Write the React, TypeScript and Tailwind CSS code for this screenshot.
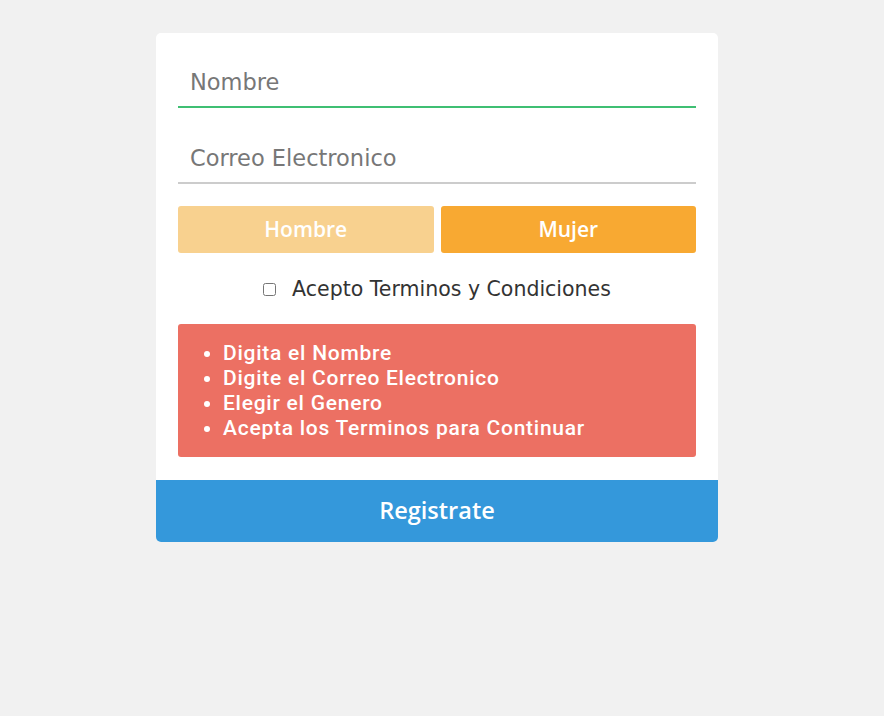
import { useState } from "react";

export default function App() {
	const [genero, setGenero] = useState<"hombre" | "mujer" | null>("mujer");
	const errores = [
		"Digita el Nombre",
		"Digite el Correo Electronico",
		"Elegir el Genero",
		"Acepta los Terminos para Continuar",
	];
	return (
		<div className="min-h-[716px] w-full bg-[#f1f1f1] pt-[33px] pr-[10px] font-['DejaVu_Sans',sans-serif]">
			<form className="mx-auto flex w-[562px] flex-col overflow-hidden rounded-[5px] bg-white">
				<div className="flex flex-col px-[22px] pt-[25px] pb-[23px]">
					<input
						autoFocus
						placeholder="Nombre"
						className="h-[50px] w-full border-b-2 border-[#3fbf73] bg-transparent px-3 text-[22.5px] text-[#333] placeholder:text-[#777] outline-none"
					/>
					<input
						placeholder="Correo Electronico"
						className="mt-[26px] h-[50px] w-full border-b-2 border-[#cccccc] bg-transparent px-3 text-[22.5px] text-[#333] placeholder:text-[#777] outline-none"
					/>
					<div className="mt-[22px] flex gap-[7px] font-['Open_Sans',sans-serif]">
						<button
							type="button"
							onClick={() => setGenero("hombre")}
							className={`h-[47px] flex-1 rounded-[3px] text-[21px] font-semibold text-white ${genero === "hombre" ? "bg-[#f8a932]" : "bg-[#f8d18f]"}`}
						>
							Hombre
						</button>
						<button
							type="button"
							onClick={() => setGenero("mujer")}
							className={`h-[47px] flex-1 rounded-[3px] text-[21px] font-semibold text-white ${genero === "mujer" ? "bg-[#f8a932]" : "bg-[#f8d18f]"}`}
						>
							Mujer
						</button>
					</div>
					<label className="mt-[21px] flex items-center justify-center gap-[16px] text-[20.5px] text-[#333]">
						<input type="checkbox" className="h-[13px] w-[13px]" />
						Acepto Terminos y Condiciones
					</label>
					<ul className="mt-[19px] list-disc rounded-[3px] bg-[#ec7063] pt-[17px] pb-[16px] pl-[45px] font-['Roboto',sans-serif] text-[21px] leading-[25px] font-medium tracking-[0.75px] text-white">
						{errores.map((e) => (
							<li key={e}>{e}</li>
						))}
					</ul>
				</div>
				<button
					type="submit"
					className="h-[62px] w-full bg-[#3498db] font-['Open_Sans',sans-serif] text-[23.5px] font-semibold text-white"
				>
					Registrate
				</button>
			</form>
		</div>
	);
}
